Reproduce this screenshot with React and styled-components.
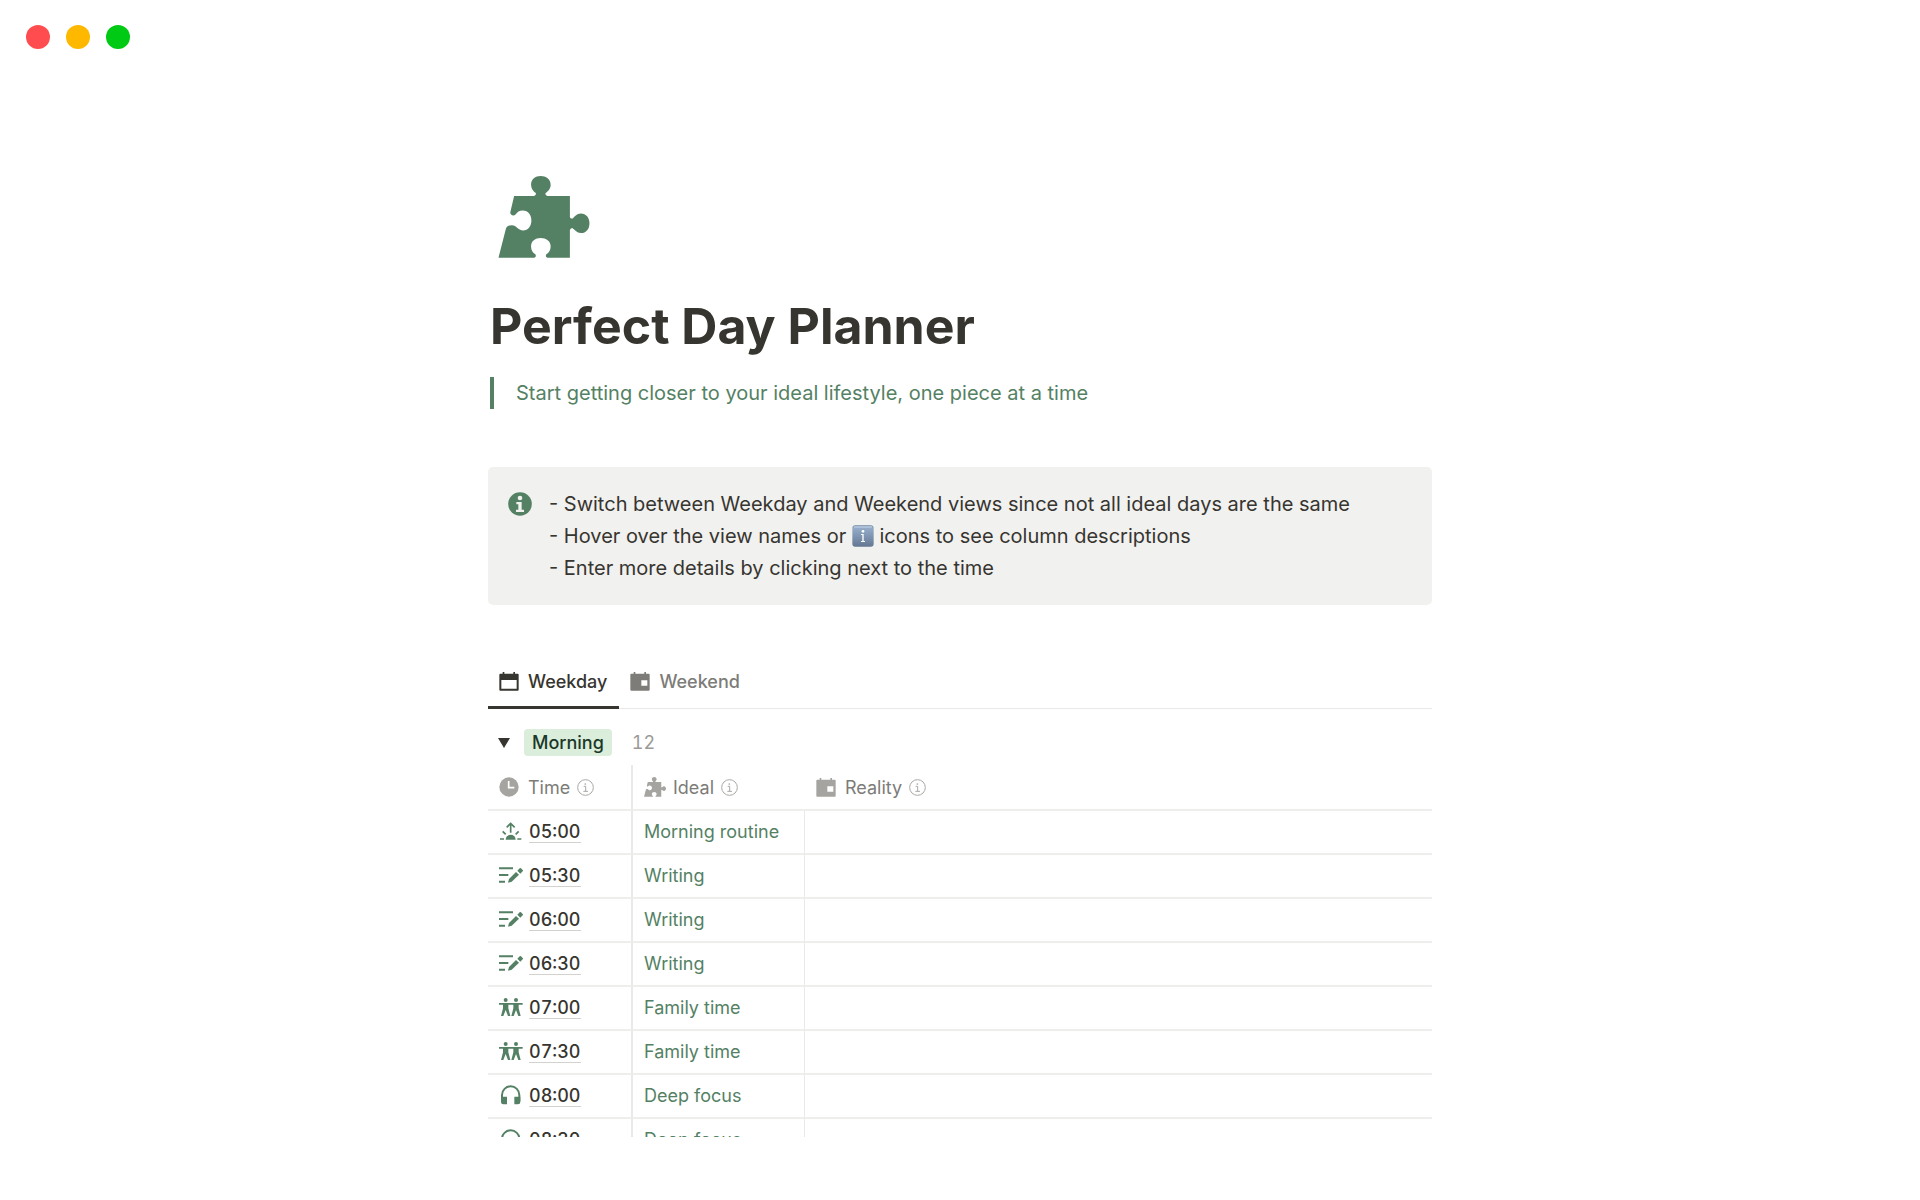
import { useState } from 'react'
import styled, { createGlobalStyle } from 'styled-components'

const GlobalStyle = createGlobalStyle`
    * {
        box-sizing: border-box;
    }
    body {
        margin: 0;
        background-color: #ffffff;
        color: #37352f;
        font-family: Inter, "Liberation Sans", sans-serif;
    }
    button {
        border: none;
        background: none;
        padding: 0;
        font-family: inherit;
        color: inherit;
        cursor: pointer;
    }
    svg {
        display: block;
        flex-shrink: 0;
    }
`
const Window = styled.div`
    display: flex;
    flex-direction: column;
    height: 100vh;
    padding-bottom: 63px;
`
const TitleBar = styled.div`
    display: flex;
    gap: 16px;
    padding: 25px 26px;
`
const Dot = styled.span`
    width: 24px;
    height: 24px;
    border-radius: 50%;
    background-color: ${(props) => props.$color};
`
const Scroller = styled.main`
    flex: 1;
    min-height: 0;
    overflow-y: auto;
    scrollbar-width: none;
`
const Page = styled.div`
    width: 100%;
    max-width: 944px;
    margin: 0 auto;
    padding-top: 102px;
`
const PageIcon = styled.div`
    padding-left: 10px;
    color: #548164;
`
const Title = styled.h1`
    margin: 36px 0 0;
    padding-left: 2px;
    font-size: 50px;
    line-height: 64px;
    font-weight: 700;
`
const Quote = styled.blockquote`
    margin: 19px 2px 0;
    padding-left: 22px;
    border-left: 4px solid #548164;
    color: #548164;
    font-size: 20px;
    line-height: 32px;
`
const Callout = styled.section`
    display: flex;
    gap: 17px;
    margin-top: 58px;
    padding: 21px 20px;
    border-radius: 5px;
    background-color: #f1f1ef;
    font-size: 20px;
    line-height: 32px;
`
const CalloutIcon = styled.div`
    padding-top: 4px;
`
const Line = styled.p`
    margin: 0;
`
const Emoji = styled.span`
    display: inline-block;
    vertical-align: -4px;
`
const Tabs = styled.div`
    display: flex;
    margin-top: 56px;
    border-bottom: 1px solid #e9e9e7;
`
const Tab = styled.button`
    display: flex;
    align-items: center;
    gap: 9px;
    height: 48px;
    padding: 0 12px 4px 11px;
    margin-bottom: -1px;
    border-bottom: 3px solid ${(props) => (props.$active ? '#37352f' : 'transparent')};
    color: ${(props) => (props.$active ? '#37352f' : '#7d7c78')};
    font-size: 18px;
    font-weight: 500;
`
const Group = styled.div`
    display: flex;
    align-items: center;
    padding: 20px 10px 9px;
`
const Toggle = styled.button`
    width: 12px;
    height: 12px;
`
const Chip = styled.span`
    margin-left: 14px;
    padding: 0 8px;
    border-radius: 4px;
    background-color: #dbeddb;
    color: #1c3829;
    font-size: 18px;
    line-height: 27px;
    font-weight: 500;
`
const Count = styled.span`
    margin-left: 20px;
    color: #9b9a97;
    font-size: 18px;
    font-variant-numeric: tabular-nums;
`
const Table = styled.table`
    width: 100%;
    table-layout: fixed;
    border-collapse: separate;
    border-spacing: 0;
    font-size: 18px;
`
const HeadCell = styled.th`
    width: ${(props) => props.$width};
    height: 46px;
    padding: 0 0 0 11px;
    border-bottom: 2px solid #eeeeec;
    border-right: ${(props) => (props.$line ? '2px solid #e9e9e7' : 'none')};
    color: #7d7c78;
    font-weight: 400;
    text-align: left;
`
const Cell = styled.td`
    height: 44px;
    padding: 0 0 2px 11px;
    border-bottom: 2px solid #eeeeec;
    border-right: ${(props) => props.$line || 'none'};
    color: #548164;
`
const HeadLabel = styled.div`
    display: flex;
    align-items: center;
    gap: 7px;
`
const Slot = styled.span`
    width: 22px;
    color: #a5a4a0;
`
const TimeLabel = styled.div`
    display: flex;
    align-items: center;
    gap: 6px;
`
const TimeLink = styled.a`
    padding-top: 2px;
    border-bottom: 1px solid #d3d2cf;
    color: #37352f;
    line-height: 20px;
    font-weight: 500;
    font-variant-numeric: tabular-nums;
    text-decoration: none;
`

const PuzzleIcon = ({ width, height }) => (
    <svg width={width} height={height} viewBox="55 46 274 247" fill="currentColor" aria-hidden="true">
        <path d="M102 106H162Q168 104 168 98C160 92 153 84 153 72C153 56 166 46 182 46C198 46 212 56 212 72C212 84 205 91 196 98Q196 104 202 106H270V170Q271 174 277 175C284 169 290 159 303 159C319 159 329 172 329 188C329 205 319 218 303 218C290 218 285 208 277 203Q271 205 270 209V292H203C197 291 196 285 200 281C206 277 212 270 212 258C212 242 198 233 182 233C166 233 153 242 153 258C153 270 159 277 165 281C169 285 168 291 162 292H55L77 206C79 197 87 194 95 194C103 194 107 198 112 203C117 208 123 210 129 210C145 210 154 196 154 180C154 164 145 150 128 150C117 150 112 155 107 161C103 165 98 166 94 163C90 160 90 157 91 153Z" />
    </svg>
)

const CalendarIcon = () => (
    <svg width="20" height="19" viewBox="0 0 60 57" fill="currentColor" aria-hidden="true">
        <path fillRule="evenodd" d="M11 0H16V5H43V0H48V5H56Q59 5 59 8V53Q59 56 56 56H4Q1 56 1 53V8Q1 5 4 5H11ZM7 24V50H53V24Z" />
    </svg>
)

const CalendarDayIcon = () => (
    <svg width="20" height="19" viewBox="0 0 60 57" fill="currentColor" aria-hidden="true">
        <path fillRule="evenodd" d="M11 0H16V5H43V0H48V5H56Q59 5 59 8V53Q59 56 56 56H4Q1 56 1 53V8Q1 5 4 5H11ZM34 25V41H52V25Z" />
    </svg>
)

const ClockIcon = () => (
    <svg width="20" height="20" viewBox="0 0 60 60" fill="none" aria-hidden="true">
        <circle cx="30" cy="30" r="29" fill="currentColor" />
        <path d="M29 12V32H46" stroke="#ffffff" strokeWidth="5" />
    </svg>
)

const HintIcon = () => (
    <svg width="17" height="17" viewBox="0 0 51 51" fill="none" stroke="#a9a8a4" aria-hidden="true">
        <circle cx="25.5" cy="25.5" r="23.5" strokeWidth="3" />
        <circle cx="25" cy="15" r="2.6" fill="#a9a8a4" stroke="none" />
        <path d="M20 22H26V37M19 37H33" strokeWidth="3" />
    </svg>
)

const InfoIcon = () => (
    <svg width="24" height="24" viewBox="0 0 72 72" aria-hidden="true">
        <circle cx="36" cy="36" r="35.5" fill="#548164" />
        <circle cx="36" cy="18" r="7" fill="#f1f1ef" />
        <path d="M25 30H41V53H48V60H24V53H31V37H25Z" fill="#f1f1ef" />
    </svg>
)

const InfoEmoji = () => (
    <svg width="22" height="22" viewBox="0 0 66 66" role="img" aria-label="info">
        <defs>
            <linearGradient id="tile" x1="0" y1="0" x2="0" y2="1">
                <stop offset="0" stopColor="#6f88a8" />
                <stop offset="0.15" stopColor="#93abc8" />
                <stop offset="1" stopColor="#647793" />
            </linearGradient>
        </defs>
        <rect x="1" y="1" width="64" height="64" rx="9" fill="url(#tile)" />
        <rect x="5" y="4" width="56" height="4" rx="2" fill="#b9cbe0" />
        <circle cx="33" cy="19" r="4" fill="#ffffff" />
        <path d="M27 27H35V48H39V51H27V48H31V30H27Z" fill="#ffffff" />
    </svg>
)

const SunriseIcon = () => (
    <svg width="24" height="20" viewBox="-3 -4 72 60" fill="none" stroke="currentColor" strokeWidth="5" aria-hidden="true">
        <path d="M32 31V3M20 15L32 3L44 15M0 50H12M52 50H64M8 27L17 36M56 27L47 36" />
        <path d="M17 52A15 15 0 0 1 47 52Z" fill="currentColor" stroke="none" />
    </svg>
)

const WritingIcon = () => (
    <svg width="24" height="16" viewBox="0 -1 72 48" fill="none" stroke="currentColor" strokeWidth="6" aria-hidden="true">
        <path d="M0 3H42M0 23H28M0 43H18" />
        <path d="M27 46L30 35L51 14L60 22L38 43Z" fill="currentColor" stroke="none" />
        <path d="M55 10L62 3Q64 1 66 3L71 8Q73 10 71 12L64 19Z" fill="currentColor" stroke="none" />
    </svg>
)

const FamilyIcon = () => (
    <svg width="24" height="18" viewBox="0 0 72 54" fill="currentColor" aria-hidden="true">
        <circle cx="20" cy="6" r="6" />
        <circle cx="51" cy="6" r="6" />
        <path d="M0 15H71V20H59V31L65 54H58L51 36L44 54H37L43 31V20H28V31L34 54H27L20 36L13 54H6L12 31V20H0Z" />
    </svg>
)

const HeadphonesIcon = () => (
    <svg width="24" height="20" viewBox="-5 -1 72 60" fill="none" aria-hidden="true">
        <path d="M4 48V29A26 26 0 0 1 56 29V48" stroke="currentColor" strokeWidth="6" />
        <path d="M1 34H19V57H8Q1 57 1 50ZM41 34H59V50Q59 57 52 57H41Z" fill="currentColor" />
    </svg>
)

const rows = [
    { time: '05:00', ideal: 'Morning routine', Icon: SunriseIcon },
    { time: '05:30', ideal: 'Writing', Icon: WritingIcon },
    { time: '06:00', ideal: 'Writing', Icon: WritingIcon },
    { time: '06:30', ideal: 'Writing', Icon: WritingIcon },
    { time: '07:00', ideal: 'Family time', Icon: FamilyIcon },
    { time: '07:30', ideal: 'Family time', Icon: FamilyIcon },
    { time: '08:00', ideal: 'Deep focus', Icon: HeadphonesIcon },
    { time: '08:30', ideal: 'Deep focus', Icon: HeadphonesIcon },
]

const ColumnHead = (props) => (
    <HeadCell $width={props.width} $line={props.line} scope="col">
        <HeadLabel>
            <Slot>{props.icon}</Slot>
            {props.name}
            <HintIcon />
        </HeadLabel>
    </HeadCell>
)

const App = () => {
    const [view, setView] = useState('Weekday')
    const [open, setOpen] = useState(true)

    return (
        <Window>
            <GlobalStyle />
            <TitleBar>
                <Dot $color="#ff4d4f" />
                <Dot $color="#ffb800" />
                <Dot $color="#00ca14" />
            </TitleBar>
            <Scroller>
                <Page>
                    <PageIcon>
                        <PuzzleIcon width="92" height="82" />
                    </PageIcon>
                    <Title>Perfect Day Planner</Title>
                    <Quote>Start getting closer to your ideal lifestyle, one piece at a time</Quote>
                    <Callout>
                        <CalloutIcon><InfoIcon /></CalloutIcon>
                        <div>
                            <Line>- Switch between Weekday and Weekend views since not all ideal days are the same</Line>
                            <Line>- Hover over the view names or <Emoji><InfoEmoji /></Emoji> icons to see column descriptions</Line>
                            <Line>- Enter more details by clicking next to the time</Line>
                        </div>
                    </Callout>
                    <Tabs>
                        <Tab $active={view === 'Weekday'} onClick={() => setView('Weekday')}>
                            <CalendarIcon />
                            Weekday
                        </Tab>
                        <Tab $active={view === 'Weekend'} onClick={() => setView('Weekend')}>
                            <CalendarDayIcon />
                            Weekend
                        </Tab>
                    </Tabs>
                    <Group>
                        <Toggle aria-label="Toggle group" aria-expanded={open} onClick={() => setOpen(!open)}>
                            <svg width="12" height="12" viewBox="0 0 12 12" fill="#37352f">
                                <path d="M0 1H12L6 11Z" />
                            </svg>
                        </Toggle>
                        <Chip>Morning</Chip>
                        <Count>12</Count>
                    </Group>
                    {open && (
                        <Table>
                            <thead>
                                <tr>
                                    <ColumnHead name="Time" icon={<ClockIcon />} width="145px" line />
                                    <ColumnHead name="Ideal" icon={<PuzzleIcon width="22" height="20" />} width="172px" />
                                    <ColumnHead name="Reality" icon={<CalendarDayIcon />} width="auto" />
                                </tr>
                            </thead>
                            <tbody>
                                {rows.map(({ time, ideal, Icon }) => (
                                    <tr key={time}>
                                        <Cell $line="2px solid #e9e9e7">
                                            <TimeLabel>
                                                <Icon />
                                                <TimeLink href="#">{time}</TimeLink>
                                            </TimeLabel>
                                        </Cell>
                                        <Cell $line="1px solid #e9e9e7">{ideal}</Cell>
                                        <Cell />
                                    </tr>
                                ))}
                            </tbody>
                        </Table>
                    )}
                </Page>
            </Scroller>
        </Window>
    )
}

export default App
